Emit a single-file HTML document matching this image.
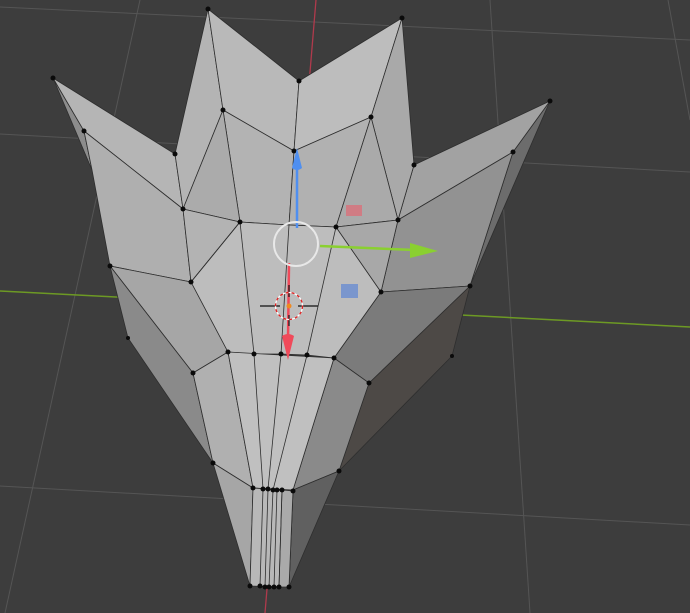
<!DOCTYPE html>
<html><head><meta charset="utf-8"><style>
html,body{margin:0;padding:0;background:#3d3d3d;overflow:hidden}
svg{display:block}
</style></head><body>
<svg width="690" height="613" viewBox="0 0 690 613" xmlns="http://www.w3.org/2000/svg">
<rect width="690" height="613" fill="#3d3d3d"/>
<g stroke="#555" stroke-width="1" fill="none">
<line x1="0" y1="7" x2="690" y2="40"/>
<line x1="0" y1="134" x2="690" y2="172"/>
<line x1="0" y1="486" x2="690" y2="525"/>
<line x1="140" y1="0" x2="5" y2="613"/>
<line x1="490" y1="0" x2="530" y2="613"/>
<line x1="668" y1="0" x2="690" y2="120"/>
</g>
<line x1="0" y1="291" x2="690" y2="327" stroke="#6d9a24" stroke-width="1.5"/>
<line x1="316" y1="0" x2="265" y2="613" stroke="#b03a4c" stroke-width="1.3"/>
<g stroke="#2e2e2e" stroke-width="0.8" stroke-linejoin="round">
<polygon points="470,286 452,356 339,471 369,383" fill="#4d4946"/>
<polygon points="550,101 470,286 513,152" fill="#6c6c6c"/>
<polygon points="414,165 550,101 513,152 398,220" fill="#a2a2a2"/>
<polygon points="398,220 513,152 470,286 381,292" fill="#929292"/>
<polygon points="381,292 470,286 369,383 334,358" fill="#7b7b7b"/>
<polygon points="334,358 369,383 339,471 293,490" fill="#8a8a8a"/>
<polygon points="339,471 293,490 289,587" fill="#606060"/>
<polygon points="53,78 84,131 92,170" fill="#8c8c8c"/>
<polygon points="53,78 175,154 183,209 84,131" fill="#b5b5b5"/>
<polygon points="84,131 183,209 191,282 110,266 92,170" fill="#afafaf"/>
<polygon points="110,266 191,282 228,352 193,373" fill="#a6a6a6"/>
<polygon points="110,266 193,373 213,463 128,338" fill="#8a8a8a"/>
<polygon points="193,373 228,352 253,488 213,463" fill="#b0b0b0"/>
<polygon points="213,463 253,488 250,586" fill="#a6a6a6"/>
<polygon points="208,9 223,110 183,209 175,154" fill="#b4b4b4"/>
<polygon points="208,9 299,81 294,151 223,110" fill="#b9b9b9"/>
<polygon points="299,81 402,18 371,117 294,151" fill="#bdbdbd"/>
<polygon points="402,18 414,165 398,220 371,117" fill="#a9a9a9"/>
<polygon points="223,110 294,151 289,225 240,222" fill="#b3b3b3"/>
<polygon points="223,110 240,222 183,209" fill="#ababab"/>
<polygon points="294,151 371,117 336,227 289,225" fill="#b1b1b1"/>
<polygon points="371,117 398,220 336,227" fill="#aaaaaa"/>
<polygon points="183,209 240,222 191,282" fill="#b3b3b3"/>
<polygon points="240,222 289,225 336,227 381,292 334,358 307,355 281,354 254,354 228,352 191,282" fill="#bdbdbd"/>
<polygon points="336,227 398,220 381,292" fill="#a8a8a8"/>
<polygon points="228,352 334,358 293,490 253,488" fill="#c0c0c0"/>
<polygon points="253,488 293,491 289,587 250,586" fill="#b8b8b8"/>
<polygon points="282,490 293,491 289,587 279,587" fill="#aaaaaa"/>
</g>
<g stroke="#2e2e2e" stroke-width="0.8" fill="none">
<polyline points="240,222 191,282"/>
<polyline points="240,222 254,354"/>
<polyline points="289,225 281,354"/>
<polyline points="336,227 307,355"/>
<polyline points="254,354 263,489 260,586"/>
<polyline points="281,354 268,489 265,587"/>
<polyline points="307,355 273,490 269,587"/>
<polyline points="277,490 274,587"/>
<polyline points="282,490 279,587"/>
</g>
<g fill="#0a0a0a">
<circle cx="53" cy="78" r="2.5"/><circle cx="84" cy="131" r="2.5"/><circle cx="175" cy="154" r="2.5"/>
<circle cx="208" cy="9" r="2.5"/><circle cx="299" cy="81" r="2.5"/><circle cx="402" cy="18" r="2.5"/>
<circle cx="550" cy="101" r="2.5"/><circle cx="223" cy="110" r="2.5"/><circle cx="294" cy="151" r="2.5"/>
<circle cx="371" cy="117" r="2.5"/><circle cx="414" cy="165" r="2.5"/><circle cx="513" cy="152" r="2.5"/>
<circle cx="183" cy="209" r="2.5"/><circle cx="240" cy="222" r="2.5"/><circle cx="336" cy="227" r="2.5"/>
<circle cx="398" cy="220" r="2.5"/><circle cx="110" cy="266" r="2.5"/><circle cx="191" cy="282" r="2.5"/>
<circle cx="381" cy="292" r="2.5"/><circle cx="470" cy="286" r="2.5"/>
<circle cx="228" cy="352" r="2.5"/><circle cx="254" cy="354" r="2.5"/><circle cx="281" cy="354" r="2.5"/>
<circle cx="307" cy="355" r="2.5"/><circle cx="334" cy="358" r="2.5"/><circle cx="193" cy="373" r="2.5"/>
<circle cx="369" cy="383" r="2.5"/><circle cx="128" cy="338" r="2"/><circle cx="452" cy="356" r="2"/>
<circle cx="213" cy="463" r="2.5"/><circle cx="339" cy="471" r="2.5"/>
<circle cx="253" cy="488" r="2.5"/><circle cx="263" cy="489" r="2.5"/><circle cx="268" cy="489" r="2.5"/><circle cx="273" cy="490" r="2.5"/><circle cx="277" cy="490" r="2.5"/><circle cx="282" cy="490" r="2.5"/><circle cx="293" cy="491" r="2.5"/>
<circle cx="250" cy="586" r="2.5"/><circle cx="260" cy="586" r="2.5"/><circle cx="265" cy="587" r="2.5"/><circle cx="269" cy="587" r="2.5"/><circle cx="274" cy="587" r="2.5"/><circle cx="279" cy="587" r="2.5"/><circle cx="289" cy="587" r="2.5"/>
</g>
<rect x="346" y="205" width="16" height="11" fill="#d9707a" opacity="0.8"/>
<rect x="341" y="284" width="17" height="14" fill="#6f8fd0" opacity="0.85"/>
<line x1="297" y1="228" x2="297" y2="165" stroke="#4f8ff0" stroke-width="2.5"/>
<path d="M297,148 L302,168 Q297,172 292,168 Z" fill="#4f8ff0"/>
<line x1="320" y1="246" x2="415" y2="250" stroke="#8ad030" stroke-width="2.5"/>
<path d="M438,251 L410,243 L410,258 Z" fill="#8ad030"/>
<line x1="289" y1="263" x2="288" y2="340" stroke="#f04a5a" stroke-width="2.5"/>
<path d="M288,360 L282,336 Q288,332 294,336 Z" fill="#f04a5a"/>
<circle cx="296" cy="244" r="22" fill="none" stroke="#e8e8e8" stroke-width="2"/>
<g stroke="#111" stroke-width="1.2">
<line x1="260" y1="306" x2="280" y2="306"/><line x1="298" y1="306" x2="318" y2="306"/>
<line x1="289" y1="285" x2="289" y2="297"/><line x1="289" y1="315" x2="289" y2="326"/>
</g>
<circle cx="289" cy="306" r="13.5" fill="none" stroke="#fff" stroke-width="1.3"/>
<circle cx="289" cy="306" r="13.5" fill="none" stroke="#e02020" stroke-width="1.3" stroke-dasharray="3 3"/>
<circle cx="289" cy="306" r="2.5" fill="#f08a20"/>
</svg>
</body></html>
